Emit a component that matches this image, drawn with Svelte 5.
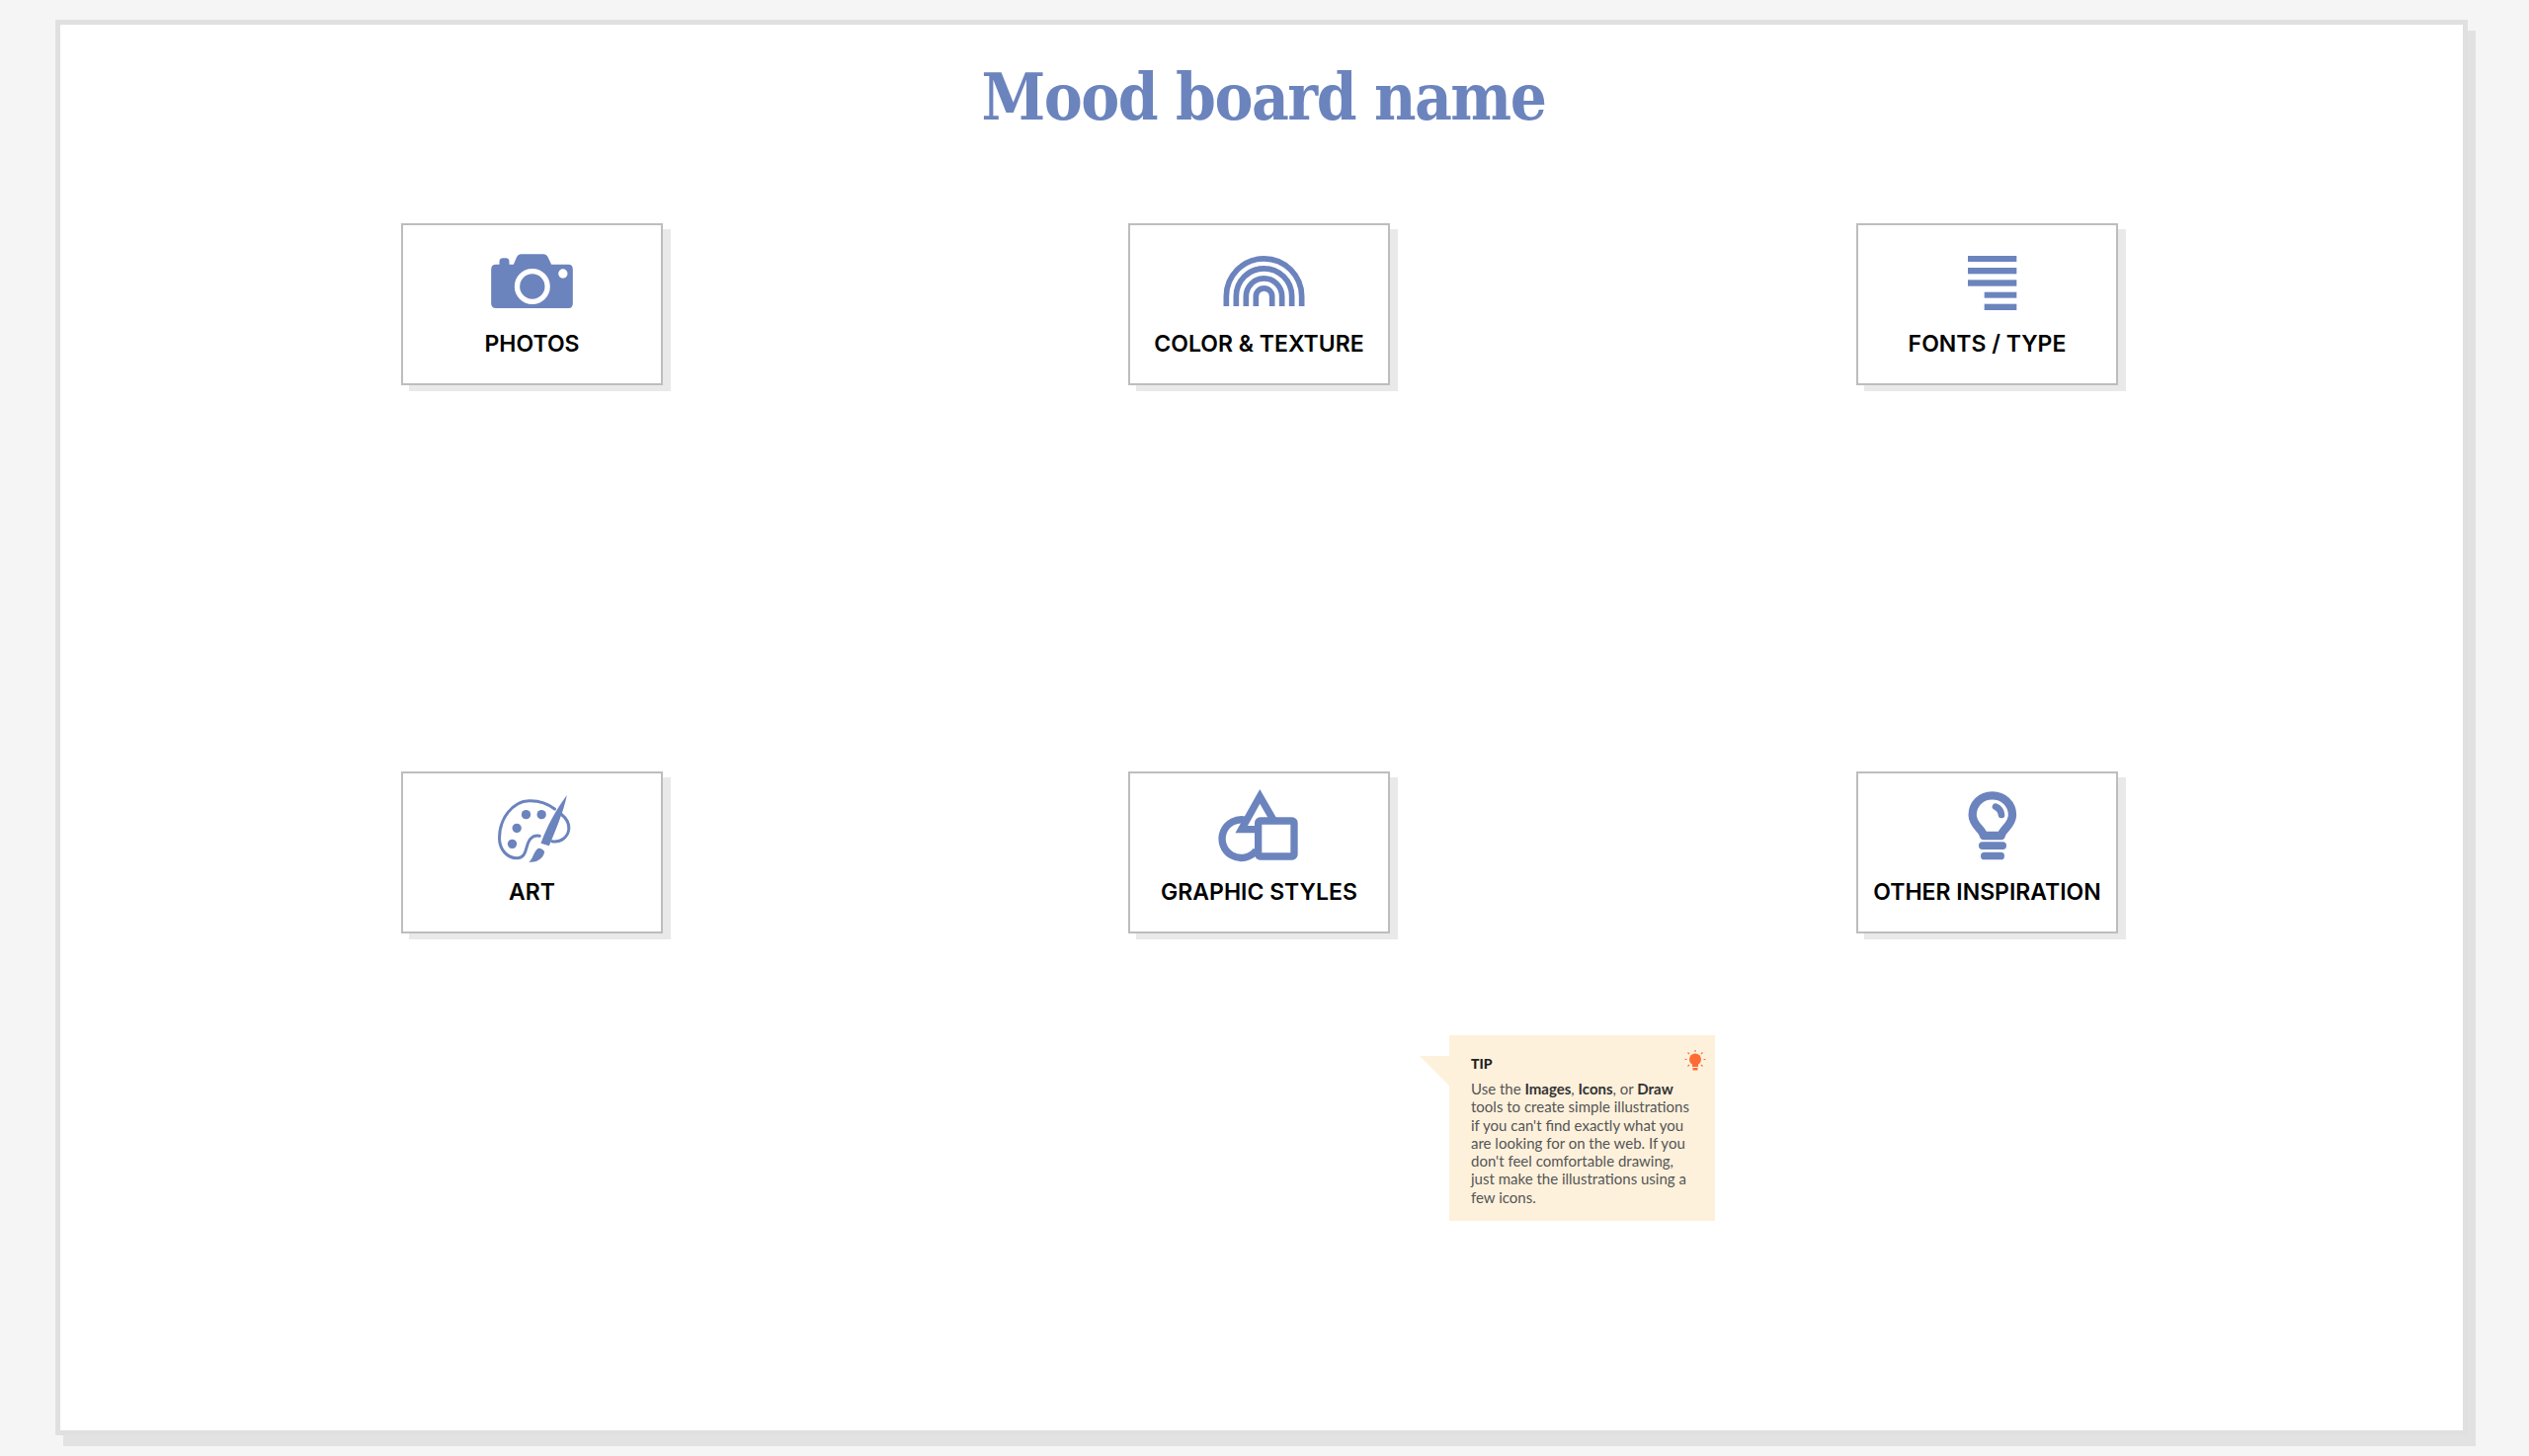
<script>
	const cards = [
		{ label: 'PHOTOS', icon: 'camera', view: '325.5 126 300 240' },
		{ label: 'COLOR & TEXTURE', icon: 'rainbow', view: '312 126 300 240' },
		{ label: 'FONTS / TYPE', icon: 'lines', view: '303 126 300 240' },
		{ label: 'ART', icon: 'palette', view: '325.5 84 300 240' },
		{ label: 'GRAPHIC STYLES', icon: 'shapes', view: '312 84 300 240' },
		{ label: 'OTHER INSPIRATION', icon: 'bulb', view: '303 84 300 240' }
	];
</script>

<div class="page">
	<main class="board">
		<h1>Mood board name</h1>

		<div class="grid">
			{#each cards as card}
				<section class="card">
					<svg class="icon" viewBox={card.view} width="100" height="80" aria-hidden="true">
						{#if card.icon === 'camera'}
							<path
								class="fill"
								d="M350 218Q350 203 365 203H375V195Q375 184 386 184H395Q405 184 405 195V203H418L428 180Q432 172 440 172H510Q518 172 522 180L533 203H585Q598 203 598 218V322Q598 336 585 336H365Q350 336 350 322Z"
							/>
							<circle cx="475" cy="270" r="46" fill="none" stroke="#fff" stroke-width="16" />
							<circle cx="568" cy="231" r="14" fill="#fff" />
						{:else if card.icon === 'rainbow'}
							<g class="line" stroke-width="17">
								<path d="M361 330V300A114.5 114.5 0 0 1 590 300V330" />
								<path d="M391 330V300A84.5 84.5 0 0 1 560 300V330" />
								<path d="M421 330V300A54.5 54.5 0 0 1 530 300V330" />
								<path d="M451 330V300A24.5 24.5 0 0 1 500 300V330" />
							</g>
						{:else if card.icon === 'lines'}
							<g class="fill">
								<rect x="393" y="177" width="148" height="18" />
								<rect x="393" y="213" width="148" height="19" />
								<rect x="393" y="250" width="148" height="19" />
								<rect x="443" y="287" width="98" height="18" />
								<rect x="443" y="323" width="98" height="19" />
							</g>
						{:else if card.icon === 'palette'}
							<g class="line" stroke-width="9" stroke-linecap="round">
								<path d="M543 150C520 132 490 124 465 125C415 126 375 180 375 238C375 275 400 299 428 299C462 299 452 258 470 240C478 232 488 230 497 232" />
								<path d="M562 165C578 178 587 195 586 210C584 235 562 252 535 248" />
							</g>
							<g class="fill">
								<circle cx="456" cy="167" r="14" />
								<circle cx="503" cy="167" r="14" />
								<circle cx="428" cy="208" r="14" />
								<circle cx="414" cy="256" r="14" />
								<path d="M580 108C572 150 550 205 526 262L501 254C518 205 548 150 580 108Z" />
								<path d="M492 270C498 268 508 272 512 280C510 298 490 315 464 311C478 303 478 280 492 270Z" />
							</g>
						{:else if card.icon === 'shapes'}
							<g class="line" stroke-width="22">
								<rect x="458" y="186" width="109" height="108" rx="6" stroke-linejoin="round" />
								<path d="M505 185L463 112L407 212H450" />
								<path d="M420 184A58 58 0 1 0 452 276" />
							</g>
						{:else}
							<path
								class="line"
								stroke-width="25"
								stroke-linejoin="round"
								d="M441 231H494C498 210 528 200 528 168C528 134 501 109 467 109C433 109 407 134 407 168C407 200 437 210 441 231Z"
							/>
							<path class="line" stroke-width="20" stroke-linecap="round" d="M477 143Q493 150 495 168" />
							<rect class="fill" x="426" y="250" width="84" height="23" rx="11" />
							<rect class="fill" x="432" y="281" width="72" height="23" rx="11" />
						{/if}
					</svg>
					<h2>{card.label}</h2>
				</section>
			{/each}
		</div>

		<aside class="tip">
			<svg class="tip-icon" viewBox="0 0 24 24" width="24" height="24" aria-hidden="true">
				<circle cx="12" cy="10.5" r="6" fill="#ff6b35" />
				<path d="M9 14h6v4H9zM9.5 19h5v2.5h-5z" fill="#ff6b35" />
				<path
					d="M12 1v2M4.5 3.5 6 5M19.5 3.5 18 5M1.5 10.5h2M20.5 10.5h2M4.5 17.5 6 16M19.5 17.5 18 16"
					stroke="#ff6b35"
					stroke-width="1.2"
					fill="none"
				/>
			</svg>
			<h3>TIP</h3>
			<p>
				Use the <b>Images</b>, <b>Icons</b>, or <b>Draw</b><br />tools to create simple illustrations<br />if
				you can't find exactly what you<br />are looking for on the web. If you<br />don't feel comfortable
				drawing,<br />just make the illustrations using a<br />few icons.
			</p>
		</aside>
	</main>
</div>

<style>
	:global(body) {
		margin: 0;
		background: #f5f5f5;
	}

	.page {
		box-sizing: border-box;
		height: 1474px;
		padding: 20px 0 0 56px;
		overflow: hidden;
		font-family: Lato, 'Liberation Sans', sans-serif;
	}

	.board {
		position: relative;
		box-sizing: border-box;
		width: 2442px;
		height: 1433px;
		background: #fff;
		border: 5px solid #e0e0e0;
		box-shadow: 8px 11px 0 #e2e2e2;
	}

	h1 {
		margin: 0;
		padding: 31px 0 0 4px;
		text-align: center;
		font-family: 'DejaVu Serif Condensed', 'DejaVu Serif', serif;
		font-weight: 700;
		font-size: 65px;
		letter-spacing: -1.5px;
		line-height: 84px;
		color: #6c84bd;
	}

	.grid {
		display: grid;
		grid-template-columns: 265px 266px 265px;
		grid-auto-rows: 164px;
		column-gap: 471px;
		row-gap: 391px;
		margin: 86px 0 0 345px;
	}

	.card {
		box-sizing: border-box;
		display: flex;
		flex-direction: column;
		align-items: center;
		width: 265px;
		padding-top: 14px;
		background: #fff;
		border: 2px solid #bdbdbd;
		box-shadow: 8px 6px 0 #e9e9e9;
	}

	.icon {
		display: block;
		flex: none;
	}

	.fill {
		fill: #6c84bd;
	}

	.line {
		fill: none;
		stroke: #6c84bd;
	}

	h2 {
		margin: 12px 0 0;
		font-family: Inter, sans-serif;
		font-weight: 600;
		font-size: 23px;
		line-height: 28px;
		white-space: nowrap;
		color: #000;
	}

	.tip {
		position: absolute;
		left: 1406px;
		top: 1023px;
		box-sizing: border-box;
		width: 269px;
		height: 188px;
		padding: 20px 10px 0 22px;
		background: #fdf1dc;
	}

	.tip::before {
		content: '';
		position: absolute;
		left: -30px;
		top: 21px;
		border-top: 30px solid #fdf1dc;
		border-left: 30px solid transparent;
	}

	.tip-icon {
		position: absolute;
		right: 8px;
		top: 14px;
	}

	h3 {
		margin: 0 0 7px;
		font-weight: 900;
		font-size: 14px;
		line-height: 18px;
		color: #222;
	}

	p {
		margin: 0;
		font-size: 15px;
		line-height: 18.3px;
		white-space: nowrap;
		color: #555;
	}

	b {
		font-weight: 700;
		color: #333;
	}
</style>
